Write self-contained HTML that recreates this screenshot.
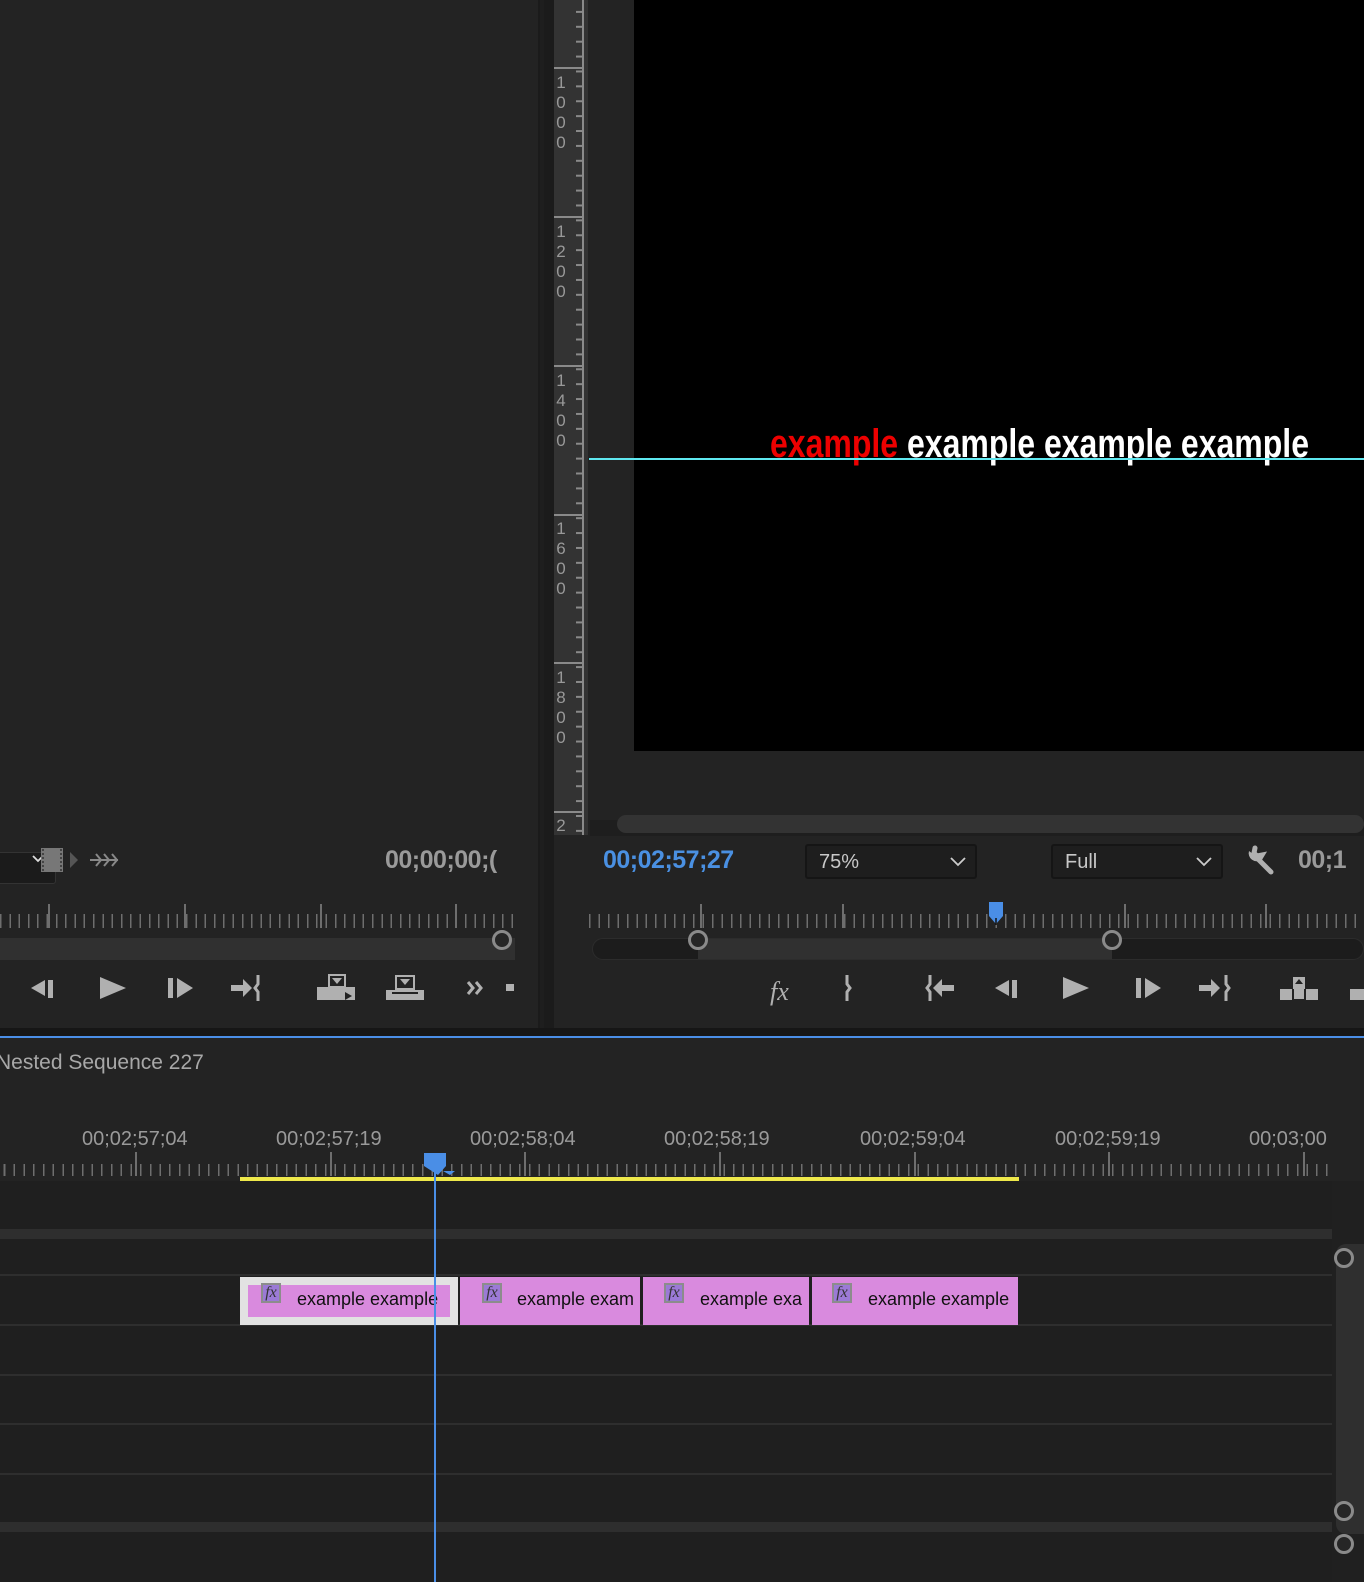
<!DOCTYPE html>
<html><head><meta charset="utf-8"><style>
*{margin:0;padding:0;box-sizing:border-box}
body{width:1364px;height:1582px;background:#232323;position:relative;overflow:hidden;font-family:"Liberation Sans",sans-serif}
.a{position:absolute}
.tc{color:#9a9a9a;font-size:25px;font-weight:bold;letter-spacing:-0.5px}
.ticks{background-image:repeating-linear-gradient(to right,#6e6e6e 0 1.5px,transparent 1.5px 9.3px)}
.dd{border:2px solid #151515;background:#1e1e1e;border-radius:3px;color:#c8c8c8;font-size:20px}
.ring{width:20px;height:20px;border:3.5px solid #8a8a8a;border-radius:50%;background:#262626}
.clip{background:#d98ade;height:48px;top:1277px;color:#111;font-size:18px}
.fx{position:absolute;width:20px;height:20px;background:#9b7ad6;border:2px solid #8c8c8c;color:#333;font-style:italic;font-family:"Liberation Serif",serif;font-size:16px;line-height:16px;text-align:center}
.hl{height:2px;background:#2e2e2e;left:0;width:1332px}
.tl{color:#9a9a9a;font-size:20px}
</style></head><body>

<div class="a" style="left:538px;top:0;width:16px;height:1030px;background:#1b1b1b"></div>
<div class="a" style="left:540px;top:0;width:4px;height:1030px;background:#1e1e1e"></div>

<div class="a" style="left:554px;top:0;width:34px;height:835px;background:#333"></div>
<div class="a" style="left:582px;top:0;width:2px;height:835px;background:#8a8a8a"></div>
<div class="a" style="left:576px;top:0;width:6px;height:835px;background-image:repeating-linear-gradient(to bottom,transparent 0 13px,#8a8a8a 13px 15px,transparent 15px 14.9px);background-size:6px 14.9px;background-position:0 -2px"></div>
<div class="a" style="left:554px;top:67px;width:30px;height:2px;background:#8a8a8a"></div>
<div class="a" style="left:554px;top:216px;width:30px;height:2px;background:#8a8a8a"></div>
<div class="a" style="left:554px;top:365px;width:30px;height:2px;background:#8a8a8a"></div>
<div class="a" style="left:554px;top:514px;width:30px;height:2px;background:#8a8a8a"></div>
<div class="a" style="left:554px;top:662px;width:30px;height:2px;background:#8a8a8a"></div>
<div class="a" style="left:554px;top:811px;width:30px;height:2px;background:#8a8a8a"></div>
<div class="a" style="left:554px;top:73px;width:14px;color:#999;font-size:17px;line-height:20px;text-align:center">1<br>0<br>0<br>0</div>
<div class="a" style="left:554px;top:222px;width:14px;color:#999;font-size:17px;line-height:20px;text-align:center">1<br>2<br>0<br>0</div>
<div class="a" style="left:554px;top:371px;width:14px;color:#999;font-size:17px;line-height:20px;text-align:center">1<br>4<br>0<br>0</div>
<div class="a" style="left:554px;top:519px;width:14px;color:#999;font-size:17px;line-height:20px;text-align:center">1<br>6<br>0<br>0</div>
<div class="a" style="left:554px;top:668px;width:14px;color:#999;font-size:17px;line-height:20px;text-align:center">1<br>8<br>0<br>0</div>
<div class="a" style="left:554px;top:816px;width:14px;color:#999;font-size:17px;line-height:20px;text-align:center">2</div>

<div class="a" style="left:634px;top:0;width:730px;height:751px;background:#000"></div>
<div class="a" style="left:770px;top:422px;white-space:nowrap;font-family:'Liberation Sans Narrow','Liberation Sans',sans-serif;font-weight:bold;font-size:40px;color:#fff;transform:scaleX(0.8);transform-origin:left top"><span style="color:#e00">example</span> example example example</div>
<div class="a" style="left:589px;top:458px;width:775px;height:2px;background:#5fe8f0"></div>

<div class="a" style="left:590px;top:820px;width:774px;height:16px;background:#1e1e1e"></div>
<div class="a" style="left:617px;top:815px;width:747px;height:18px;background:#333;border-radius:9px"></div>

<div class="a" style="left:-6px;top:852px;width:62px;height:32px;border:1px solid #333;background:#1b1b1b;border-radius:3px"></div>
<svg class="a" style="left:30px;top:846px" width="95" height="30"><path d="M3 10l5 5 6-6" stroke="#ddd" stroke-width="1.8" fill="none"/><rect x="11" y="2" width="22" height="24" fill="#777"/><path d="M13 3v22M31 3v22" stroke="#444" stroke-width="2" stroke-dasharray="2 2"/><path d="M40 6l8 8-8 8z" fill="#555"/><path d="M60 14h28M66 8l5 6-5 6M74 8l5 6-5 6M82 8l5 6-5 6" stroke="#888" stroke-width="2" fill="none"/></svg>
<div class="a tc" style="left:385px;top:846px">00;00;00;(</div>
<div class="a ticks" style="left:0;top:914px;width:515px;height:14px"></div>
<div class="a" style="left:48px;top:904px;width:2px;height:24px;background:#6e6e6e"></div>
<div class="a" style="left:184px;top:904px;width:2px;height:24px;background:#6e6e6e"></div>
<div class="a" style="left:320px;top:904px;width:2px;height:24px;background:#6e6e6e"></div>
<div class="a" style="left:455px;top:904px;width:2px;height:24px;background:#6e6e6e"></div>
<div class="a" style="left:0;top:938px;width:515px;height:22px;background:#303030"></div>
<div class="a ring" style="left:492px;top:930px"></div>
<svg class="a" style="left:0;top:970px" width="538" height="40" fill="#b0b0b0"><path d="M31 18l14-8v16zM48 10h5v18h-5z"/><path d="M100 7l26 11-26 11z"/><path d="M168 8h5v20h-5zM177 8l16 10-16 10z"/><path d="M231 15h12v-6l9 9-9 9v-6h-12z"/><path d="M258 5v9l-3 4 3 4v9" stroke="#b0b0b0" stroke-width="3" fill="none"/><path d="M317 17h11v-13h18v13h9v13h-38z"/><path d="M330 6h14v10h-14z" fill="#232323"/><path d="M332 8h10l-5 6z" fill="#b0b0b0"/><path d="M345 22l7 4-7 4z" fill="#232323"/><path d="M386 20h9v-15h20v15h9v10h-38z"/><path d="M397 7h16v11h-16z" fill="#232323"/><path d="M400 9h10l-5 6z" fill="#b0b0b0"/><path d="M392 23h26" stroke="#232323" stroke-width="2"/><path d="M468 12l5 6-5 6M476 12l5 6-5 6" stroke="#b0b0b0" stroke-width="3" fill="none"/><rect x="506" y="14" width="8" height="7"/></svg>

<div class="a" style="left:603px;top:846px;color:#4a90e2;font-size:25px;font-weight:bold;letter-spacing:-0.5px">00;02;57;27</div>
<div class="a dd" style="left:805px;top:844px;width:172px;height:35px;padding:5px 12px">75%</div>
<div class="a dd" style="left:1051px;top:844px;width:172px;height:35px;padding:5px 12px">Full</div>
<svg class="a" style="left:945px;top:852px" width="300" height="20"><path d="M6 6l7 7 7-7M252 6l7 7 7-7" stroke="#ccc" stroke-width="1.8" fill="none"/></svg>
<svg class="a" style="left:1245px;top:845px" width="34" height="34"><path d="M10 3l-1 5 3 3 5-1-3 5 12 12" stroke="#b0b0b0" stroke-width="5" stroke-linecap="round" fill="none"/><path d="M4 6a8 8 0 0 0 12 9l-3-5-5-1z" fill="#b0b0b0"/></svg>
<div class="a tc" style="left:1298px;top:846px">00;1</div>
<div class="a ticks" style="left:589px;top:914px;width:775px;height:14px;background-image:repeating-linear-gradient(to right,#6e6e6e 0 1.5px,transparent 1.5px 9.45px)"></div>
<div class="a" style="left:700px;top:904px;width:2px;height:24px;background:#6e6e6e"></div>
<div class="a" style="left:842px;top:904px;width:2px;height:24px;background:#6e6e6e"></div>
<div class="a" style="left:1124px;top:904px;width:2px;height:24px;background:#6e6e6e"></div>
<div class="a" style="left:1265px;top:904px;width:2px;height:24px;background:#6e6e6e"></div>
<svg class="a" style="left:988px;top:900px" width="24" height="28"><path d="M1 2h14v14l-7 8-7-8z" fill="#4a8ee6"/><path d="M8 18v7" stroke="#111" stroke-width="1.5"/></svg>
<div class="a" style="left:592px;top:938px;width:772px;height:22px;background:#1c1c1c;border:1px solid #2c2c2c;border-radius:11px"></div>
<div class="a" style="left:698px;top:939px;width:414px;height:20px;background:#303030"></div>
<div class="a ring" style="left:688px;top:930px"></div>
<div class="a ring" style="left:1102px;top:930px"></div>
<svg class="a" style="left:760px;top:970px" width="604" height="40" fill="#b0b0b0"><text x="10" y="30" font-family="Liberation Serif,serif" font-style="italic" font-size="26" fill="#b0b0b0">fx</text><path d="M87 5v9l3 4-3 4v9" stroke="#b0b0b0" stroke-width="3" fill="none"/><path d="M170 5v9l-3 4 3 4v9" stroke="#b0b0b0" stroke-width="3" fill="none"/><path d="M194 15h-12v-6l-9 9 9 9v-6h12z"/><path d="M235 18l14-8v16zM252 10h5v18h-5z"/><path d="M303 7l26 11-26 11z"/><path d="M376 8h5v20h-5zM385 8l16 10-16 10z"/><path d="M439 15h12v-6l9 9-9 9v-6h-12z"/><path d="M466 5v9l3 4-3 4v9" stroke="#b0b0b0" stroke-width="3" fill="none"/><path d="M520 19h13v-12h12v12h13v11h-38z"/><path d="M535 14h8l-4-5z" fill="#232323"/><path d="M533 19v11h12v-11" stroke="#232323" stroke-width="2" fill="none"/><rect x="590" y="19" width="14" height="11"/></svg>

<div class="a" style="left:0;top:1028px;width:1364px;height:9px;background:#161616"></div>
<div class="a" style="left:0;top:1036px;width:1364px;height:2px;background:#4a8ee6"></div>

<div class="a" style="left:-4px;top:1051px;color:#a8a8a8;font-size:21px">Nested Sequence 227</div>
<div class="a tl" style="left:82px;top:1128px">00;02;57;04</div>
<div class="a tl" style="left:276px;top:1128px">00;02;57;19</div>
<div class="a tl" style="left:470px;top:1128px">00;02;58;04</div>
<div class="a tl" style="left:664px;top:1128px">00;02;58;19</div>
<div class="a tl" style="left:860px;top:1128px">00;02;59;04</div>
<div class="a tl" style="left:1055px;top:1128px">00;02;59;19</div>
<div class="a tl" style="left:1249px;top:1128px">00;03;00</div>
<div class="a ticks" style="left:0;top:1164px;width:1332px;height:12px;background-image:repeating-linear-gradient(to right,#6e6e6e 0 1.5px,transparent 1.5px 9.72px);background-position:4px 0"></div>
<div class="a" style="left:135px;top:1152px;width:2px;height:24px;background:#6e6e6e"></div>
<div class="a" style="left:330px;top:1152px;width:2px;height:24px;background:#6e6e6e"></div>
<div class="a" style="left:524px;top:1152px;width:2px;height:24px;background:#6e6e6e"></div>
<div class="a" style="left:719px;top:1152px;width:2px;height:24px;background:#6e6e6e"></div>
<div class="a" style="left:914px;top:1152px;width:2px;height:24px;background:#6e6e6e"></div>
<div class="a" style="left:1108px;top:1152px;width:2px;height:24px;background:#6e6e6e"></div>
<div class="a" style="left:1303px;top:1152px;width:2px;height:24px;background:#6e6e6e"></div>
<div class="a" style="left:0;top:1181px;width:1332px;height:401px;background:#1f1f1f"></div>
<div class="a" style="left:240px;top:1177px;width:779px;height:4px;background:#eee84a"></div>
<div class="a" style="left:0;top:1229px;width:1332px;height:10px;background:#2e2e2e"></div>
<div class="a hl" style="top:1274px"></div>
<div class="a hl" style="top:1324px"></div>
<div class="a hl" style="top:1374px"></div>
<div class="a hl" style="top:1423px"></div>
<div class="a hl" style="top:1473px"></div>
<div class="a" style="left:0;top:1522px;width:1332px;height:10px;background:#2e2e2e"></div>

<div class="a clip" style="left:240px;width:218px;background:#e2e2e2"><div class="a" style="left:8px;top:8px;width:202px;height:32px;background:#d98ade"></div><div class="fx" style="left:21px;top:6px">fx</div><span class="a" style="left:57px;top:12px">example example</span></div>
<div class="a clip" style="left:460px;width:180px"><div class="fx" style="left:22px;top:6px">fx</div><span class="a" style="left:57px;top:12px">example exam</span></div>
<div class="a clip" style="left:643px;width:166px"><div class="fx" style="left:21px;top:6px">fx</div><span class="a" style="left:57px;top:12px">example exa</span></div>
<div class="a clip" style="left:812px;width:206px"><div class="fx" style="left:20px;top:6px">fx</div><span class="a" style="left:56px;top:12px">example example</span></div>

<div class="a" style="left:434px;top:1168px;width:1.5px;height:414px;background:#4a8ee6"></div>
<svg class="a" style="left:423px;top:1152px" width="34" height="28"><path d="M1 1h22v13l-8 9-14-9z" fill="#4a8ee6"/><path d="M20 19h12l-5 4z" fill="#4a8ee6"/></svg>

<div class="a" style="left:1332px;top:1181px;width:32px;height:401px;background:#202020"></div>
<div class="a" style="left:1336px;top:1244px;width:28px;height:290px;background:#2f2f2f;border-radius:10px 0 0 10px"></div>
<div class="a ring" style="left:1334px;top:1248px"></div>
<div class="a ring" style="left:1334px;top:1501px"></div>
<div class="a ring" style="left:1334px;top:1534px"></div>
</body></html>
